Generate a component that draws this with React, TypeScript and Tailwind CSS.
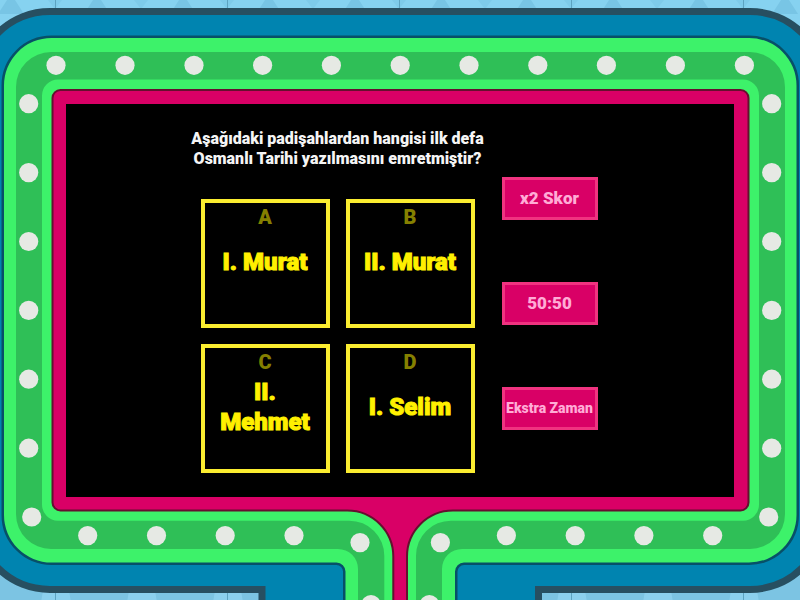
import React from 'react';

interface Answer {
  letter: string;
  label: string;
}

interface Bulb {
  x: number;
  y: number;
}

const question = 'Aşağıdaki padişahlardan hangisi ilk defa Osmanlı Tarihi yazılmasını emretmiştir?';

const answers: Answer[] = [
  { letter: 'A', label: 'I. Murat' },
  { letter: 'B', label: 'II. Murat' },
  { letter: 'C', label: 'II. Mehmet' },
  { letter: 'D', label: 'I. Selim' },
];

const lifelines = [
  { label: 'x2 Skor', size: 'text-[17px]' },
  { label: '50:50', size: 'text-[17px]' },
  { label: 'Ekstra Zaman', size: 'text-[14px]' },
];

// The left half of the lamps; the right half is mirrored from it.
const leftBulbs: Bulb[] = [
  ...[56, 125, 194, 262.6, 331.4].map((x) => ({ x, y: 65.3 })),
  ...[103.7, 172.6, 241.5, 310.4, 379.2, 448.2].map((y) => ({ x: 28.7, y })),
  { x: 31.7, y: 517 },
  ...[87.7, 156.5, 225.2, 294].map((x) => ({ x, y: 535.6 })),
  { x: 360, y: 542.6 },
  { x: 371, y: 604.5 },
];

const bulbs: Bulb[] = [
  ...leftBulbs,
  { x: 400.2, y: 65.3 },
  ...leftBulbs.map(({ x, y }) => ({ x: 800.4 - x, y })),
];

const StageFrame: React.FC = () => (
  <svg
    className="absolute inset-0 h-full w-full"
    viewBox="0 0 800 600"
    preserveAspectRatio="none"
    aria-hidden="true"
  >
    <defs>
      <pattern id="wallTop" x="54" width="86" height="40" patternUnits="userSpaceOnUse">
        <rect width="86" height="40" fill="#86d2f0" />
        <path d="M39 0H47L56 14H30Z" fill="#78c5e5" />
        <path d="M-6 0H8L1 9ZM80 0H94L87 9Z" fill="#7ecbea" />
      </pattern>
      <pattern id="wallBottom" x="12" y="580" width="86" height="40" patternUnits="userSpaceOnUse">
        <rect width="86" height="40" fill="#7cc4e3" />
        <path d="M33 0H55L59 22H29Z" fill="#8bd0ee" />
      </pattern>
    </defs>
    <rect width="800" height="300" fill="url(#wallTop)" />
    <rect y="300" width="800" height="300" fill="url(#wallBottom)" />
    <path d="M55.5 0V600M227.5 0V600M399.5 0V600M571.5 0V600M743.5 0V600" stroke="#5ca3c1" />

    {/* blue cabinet */}
    <path
      d="M50 11.5H750A74 74 0 0 1 824 85.5V515.5A74 74 0 0 1 750 589.5H538.5V620H262V589.5H50A74 74 0 0 1-24 515.5V85.5A74 74 0 0 1 50 11.5Z"
      fill="#0084b0"
      stroke="#274f61"
      strokeWidth="7"
    />

    {/* green lamp track */}
    <path
      d="M52 38H749A47.5 47.5 0 0 1 796.5 85.5V515A47.5 47.5 0 0 1 749 562.5H464A9 9 0 0 0 455 571.5V620H345.5V571.5A9 9 0 0 0 336.5 562.5H51.5A47.5 47.5 0 0 1 4 515V85.5A47.5 47.5 0 0 1 51.5 38Z"
      fill="#3df26a"
      stroke="#075068"
      strokeWidth="5"
      paintOrder="stroke"
    />
    <path
      d="M51 52H750A35 35 0 0 1 785 87V514A35 35 0 0 1 750 549H462A20 20 0 0 0 442 569V620H358V569A20 20 0 0 0 338 549H51A35 35 0 0 1 16 514V87A35 35 0 0 1 51 52Z"
      fill="#2fbf57"
    />
    <path
      d="M58 79.5H743A16 16 0 0 1 759 95.5V504.7A16 16 0 0 1 743 520.7H451A35 35 0 0 0 416 555.7V620H384.3V555.7A35 35 0 0 0 349.3 520.7H58A16 16 0 0 1 42 504.7V95.5A16 16 0 0 1 58 79.5Z"
      fill="#3df26a"
    />

    {/* pink surround and stem */}
    <path
      d="M60.5 90H740.5A8 8 0 0 1 748.5 98V502.5A8 8 0 0 1 740.5 510.5H453A46 46 0 0 0 407 556.5V620H393.3V556.5A46 46 0 0 0 347.3 510.5H60.5A8 8 0 0 1 52.5 502.5V98A8 8 0 0 1 60.5 90Z"
      fill="#d90066"
      stroke="#65102f"
      strokeWidth="2"
    />

    {bulbs.map(({ x, y }) => (
      <circle key={`${x}-${y}`} cx={x} cy={y} r="9.6" fill="#e6e9e4" />
    ))}
  </svg>
);

const App: React.FC = () => {
  return (
    <div className="relative flex min-h-screen flex-col overflow-hidden bg-[#86d2f0] px-[66px] pt-[104px] pb-[103px] font-['Roboto','Liberation_Sans',sans-serif] font-black">
      <StageFrame />
      <main className="relative flex flex-1 items-start justify-center gap-4 bg-black pr-[13px]">
        <section className="flex w-[296px] flex-col items-center pt-[25px]">
          <h1 className="text-center text-[16px] leading-5 text-[#f5f5f5]">{question}</h1>
          <div className="mt-[30px] grid w-[274px] grid-cols-2 gap-4">
            {answers.map(({ letter, label }) => (
              <button
                key={letter}
                type="button"
                className="flex aspect-square flex-col items-center border-4 border-[#fbed30] px-3"
              >
                <span className="text-[20px] leading-7 text-[#858000]">{letter}</span>
                <span className="-mt-8 flex flex-1 items-center text-center text-[24px] leading-[30px] text-[#fff000] [-webkit-text-stroke:1px_#fff000]">
                  {label}
                </span>
              </button>
            ))}
          </div>
        </section>

        <aside className="flex w-24 flex-col gap-[62px] pt-[73px]">
          {lifelines.map(({ label, size }) => (
            <button
              key={label}
              type="button"
              className={`flex h-[43px] items-center justify-center border-3 border-[#f03380] bg-[#d90066] whitespace-nowrap text-[#ffacd6] ${size}`}
            >
              {label}
            </button>
          ))}
        </aside>
      </main>
    </div>
  );
};

export default App;
